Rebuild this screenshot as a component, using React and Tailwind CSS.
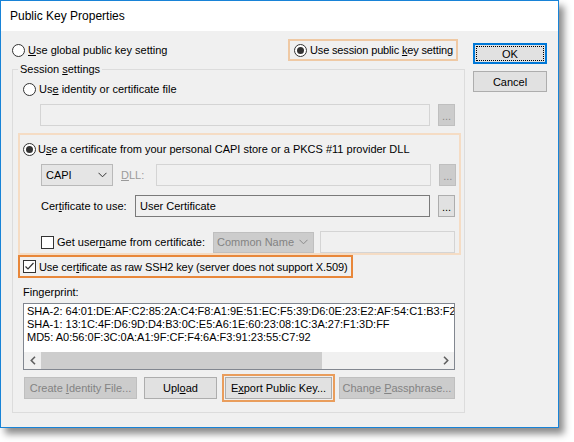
import React from "react";

function Radio({ checked }) {
  return (
    <span className="w-[13px] h-[13px] shrink-0 rounded-full border border-[#333] bg-white flex items-center justify-center">
      {checked && <span className="w-[7px] h-[7px] rounded-full bg-[#333]" />}
    </span>
  );
}

function Checkbox({ checked }) {
  return (
    <span className="w-[13px] h-[13px] shrink-0 border border-[#333] bg-white flex items-center justify-center">
      {checked && (
        <svg width="11" height="11" viewBox="0 0 11 11">
          <path d="M1.5 5.5 L4 8 L9.5 2" fill="none" stroke="#333" strokeWidth="1.2" />
        </svg>
      )}
    </span>
  );
}

function Chevron({ color = "#333" }) {
  return (
    <svg width="9" height="6" viewBox="0 0 9 6">
      <path d="M0.5 0.8 L4.5 4.8 L8.5 0.8" fill="none" stroke={color} strokeWidth="1" />
    </svg>
  );
}

function DotsBtn({ disabled }) {
  return (
    <div
      className={
        "w-[17px] h-[22px] shrink-0 border flex items-end justify-center pb-[3px] leading-none " +
        (disabled
          ? "bg-[#cccccc] border-[#bfbfbf] text-[#8a8a8a]"
          : "bg-[#e1e1e1] border-[#adadad] text-black")
      }
    >
      ...
    </div>
  );
}

function Btn({ children, disabled, className = "" }) {
  return (
    <div
      className={
        "h-[22px] shrink-0 border flex items-center justify-center " +
        (disabled
          ? "bg-[#cccccc] border-[#bfbfbf] text-[#838383] "
          : "bg-[#e1e1e1] border-[#adadad] text-black ") +
        className
      }
    >
      {children}
    </div>
  );
}

export default function App() {
  return (
    <div className="w-[574px] h-[442px] bg-white font-['Liberation_Sans',Arial,sans-serif] text-[11px] text-black leading-[16px] whitespace-nowrap">
      <div className="w-[559px] h-[428px] border border-[#1883d7] flex flex-col shadow-[5px_6px_7px_rgba(0,0,0,0.45)]">
        {/* title bar */}
        <div className="h-[30px] bg-white pl-[9px] flex items-center text-[12px]">
          Public Key Properties
        </div>

        <div className="flex-1 bg-[#f0f0f0] flex">
          {/* left column */}
          <div className="ml-[11px] pt-[8px] w-[453px]">
            <div className="h-[22px] flex items-center justify-between">
              <div className="flex items-center gap-[3px]">
                <Radio />
                <span>
                  <u>U</u>se global public key setting
                </span>
              </div>
              <div className="mr-[7px] w-[170px] h-[22px] border-2 border-[#efc9a4] flex items-center pl-[4px] gap-[3px]">
                <Radio checked />
                <span className="tracking-[-0.15px]">
                  Use session public <u>k</u>ey setting
                </span>
              </div>
            </div>

            <fieldset className="border border-[#dcdcdc] w-[453px] h-[352px]">
              <legend className="ml-[5px] px-[2px] leading-[16px]">
                Session <u>s</u>ettings
              </legend>

              {/* identity file */}
              <div className="mt-[4px] ml-[10px] h-[16px] flex items-center gap-[3px]">
                <Radio />
                <span>
                  Us<u>e</u> identity or certificate file
                </span>
              </div>
              <div className="mt-[7px] ml-[27px] h-[22px] flex items-center gap-[8px]">
                <div className="w-[390px] h-[22px] border border-[#d4d4d4] bg-[#f0f0f0]" />
                <DotsBtn disabled />
              </div>

              {/* CAPI section */}
              <div className="mt-[7px] ml-[5px] w-[443px] h-[122px] border-2 border-[#f5dcc4]">
                <div className="mt-[6px] ml-[3px] h-[16px] flex items-center gap-[2px]">
                  <Radio checked />
                  <span>
                    U<u>s</u>e a certificate from your personal CAPI store or a PKCS #11 provider DLL
                  </span>
                </div>
                <div className="mt-[7px] ml-[21px] h-[22px] flex items-center">
                  <div className="w-[72px] h-[22px] border border-[#b9b9b9] bg-[#e5e5e5] flex items-center justify-between pl-[4px] pr-[5px]">
                    <span>CAPI</span>
                    <Chevron />
                  </div>
                  <span className="ml-[8px] text-[#9a9a9a]">
                    <u>D</u>LL:
                  </span>
                  <div className="ml-[12px] w-[275px] h-[22px] border border-[#d4d4d4] bg-[#f0f0f0]" />
                  <div className="ml-[8px]">
                    <DotsBtn disabled />
                  </div>
                </div>
                <div className="mt-[9px] ml-[21px] h-[22px] flex items-center">
                  <span className="w-[94px]">
                    Cer<u>t</u>ificate to use:
                  </span>
                  <div className="w-[295px] h-[22px] border border-[#7a7a7a] bg-[#f0f0f0] flex items-center pl-[4px]">
                    User Certificate
                  </div>
                  <div className="ml-[8px]">
                    <DotsBtn />
                  </div>
                </div>
                <div className="mt-[14px] ml-[21px] h-[22px] flex items-center">
                  <Checkbox />
                  <span className="ml-[3px] w-[156px]">
                    Get user<u>n</u>ame from certificate:
                  </span>
                  <div className="w-[101px] h-[21px] border border-[#bfbfbf] bg-[#cccccc] text-[#838383] flex items-center justify-between pl-[3px] pr-[5px]">
                    <span>Common Name</span>
                    <Chevron color="#8a8a8a" />
                  </div>
                  <div className="ml-[6px] w-[135px] h-[22px] border border-[#d4d4d4] bg-[#f0f0f0]" />
                </div>
              </div>

              {/* raw SSH2 key */}
              <div className="ml-[5px] w-[335px] h-[23px] border-2 border-[#e8873a] flex items-center pl-[3px] gap-[3px]">
                <Checkbox checked />
                <span className="tracking-[-0.1px]">
                  Use cer<u>t</u>ificate as raw SSH2 key (server does not support X.509)
                </span>
              </div>

              <div className="mt-[6px] ml-[10px] h-[16px] flex items-center">Fingerprint:</div>

              {/* fingerprint box */}
              <div className="mt-[3px] ml-[10px] w-[432px] h-[67px] border border-[#828790] bg-white flex flex-col">
                <div className="flex-1 overflow-hidden pl-[3px] pt-[1px] leading-[13px]">
                  <div>SHA-2: 64:01:DE:AF:C2:85:2A:C4:F8:A1:9E:51:EC:F5:39:D6:0E:23:E2:AF:54:C1:B3:F2:9A:7C</div>
                  <div>SHA-1: 13:1C:4F:D6:9D:D4:B3:0C:E5:A6:1E:60:23:08:1C:3A:27:F1:3D:FF</div>
                  <div>MD5: A0:56:0F:3C:0A:A1:9F:CF:F4:6A:F3:91:23:55:C7:92</div>
                </div>
                <div className="h-[17px] bg-[#f0f0f0] flex items-center">
                  <div className="w-[17px] h-[17px] flex items-center justify-center">
                    <svg width="6" height="9" viewBox="0 0 6 9">
                      <path d="M5 0.8 L1.3 4.5 L5 8.2" fill="none" stroke="#606060" strokeWidth="1.6" />
                    </svg>
                  </div>
                  <div className="w-[281px] h-[17px] bg-[#cdcdcd]" />
                  <div className="flex-1" />
                  <div className="w-[17px] h-[17px] flex items-center justify-center">
                    <svg width="6" height="9" viewBox="0 0 6 9">
                      <path d="M1 0.8 L4.7 4.5 L1 8.2" fill="none" stroke="#606060" strokeWidth="1.6" />
                    </svg>
                  </div>
                </div>
              </div>

              {/* buttons */}
              <div className="mt-[7px] ml-[11px] h-[22px] flex items-center">
                <Btn disabled className="w-[113px]">
                  <span>
                    Create <u>I</u>dentity File...
                  </span>
                </Btn>
                <Btn className="ml-[7px] w-[73px]">
                  <span>
                    Upl<u>o</u>ad
                  </span>
                </Btn>
                <Btn className="ml-[8px] w-[107px] outline-2 outline-solid outline-[#e99d5c] outline-offset-[1px]">
                  <span>
                    E<u>x</u>port Public Key...
                  </span>
                </Btn>
                <Btn disabled className="ml-[7px] w-[116px]">
                  <span>
                    Change <u>P</u>assphrase...
                  </span>
                </Btn>
              </div>
            </fieldset>
          </div>

          {/* right column */}
          <div className="ml-[8px] pt-[12px] flex flex-col">
            <div className="w-[74px] h-[21px] border-2 border-[#0078d7] bg-[#e1e1e1] p-[1px] flex">
              <div className="flex-1 border border-dotted border-black flex items-center justify-center">
                OK
              </div>
            </div>
            <Btn className="mt-[7px] w-[74px] !h-[21px]">Cancel</Btn>
          </div>
        </div>
      </div>
    </div>
  );
}
